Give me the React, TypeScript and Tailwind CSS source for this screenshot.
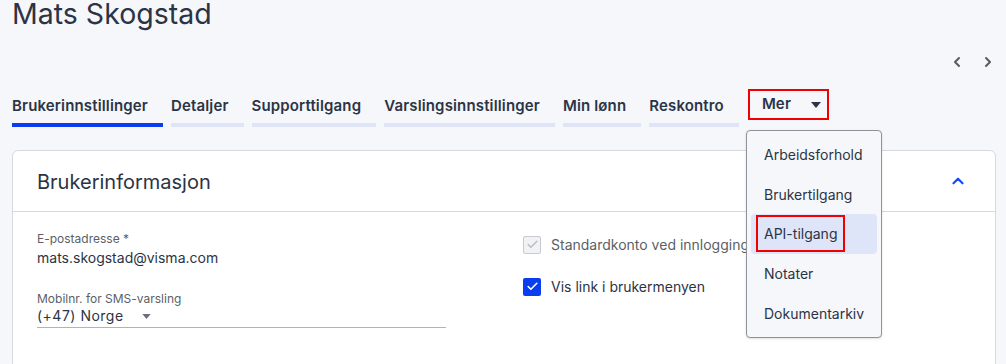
import React from "react";
import { ChevronLeft, ChevronRight, ChevronUp, Check } from "lucide-react";

const tabs = [
  { label: "Brukerinnstillinger", active: true },
  { label: "Detaljer" },
  { label: "Supporttilgang" },
  { label: "Varslingsinnstillinger" },
  { label: "Min lønn" },
  { label: "Reskontro" },
];

const menu = ["Arbeidsforhold", "Brukertilgang", "API-tilgang", "Notater", "Dokumentarkiv"];

function Caret({ className, w = 10, h = 6 }: { className?: string; w?: number; h?: number }) {
  return (
    <svg width={w} height={h} viewBox="0 0 10 6" className={className}>
      <path d="M0 0 L10 0 L5 6 Z" fill="currentColor" />
    </svg>
  );
}

export default function App() {
  return (
    <div
      className="relative h-[364px] w-full overflow-hidden bg-[#f6f7fb] text-[#2b3445]"
      style={{ fontFamily: "Inter, 'Open Sans', sans-serif" }}
    >
      <h1 className="pl-[12px] text-[28.5px] leading-[28px] font-normal text-[#2b3445]">
        Mats Skogstad
      </h1>
      <div className="mt-[26px] flex justify-end gap-[15px] pr-[10px] text-[#555b66]">
        <ChevronLeft size={16} strokeWidth={3} />
        <ChevronRight size={16} strokeWidth={3} />
      </div>
      <div className="mt-[19px] flex items-end gap-[8px] pl-[12px]">
        {tabs.map((t) => (
          <div
            key={t.label}
            className={`pr-[15px] pb-[7px] text-[15px] leading-[20px] font-semibold tracking-[0.15px] border-b-4 ${
              t.active ? "border-[#0a3cf0]" : "border-[#dfe4f6]"
            }`}
          >
            {t.label}
          </div>
        ))}
        <div className="ml-[1px] mb-[7px] flex h-[31px] w-[81px] items-center justify-between border-2 border-[#f00000] pl-[12px] pr-[6px] text-[15px] font-semibold tracking-[0.15px]">
          <span>Mer</span>
          <Caret className="text-[#2b3445]" />
        </div>
      </div>

      <div className="mx-[10px] ml-[12px] mt-[23px] rounded-[6px] border border-[#d6d8de] bg-white">
        <div className="flex h-[61px] items-center justify-between border-b border-[#d6d8de] pl-[24px] pr-[28px]">
          <span className="pt-[2px] text-[20px] font-normal text-[#2b3445]">Brukerinformasjon</span>
          <ChevronUp size={18} strokeWidth={3} className="text-[#1a4bf5]" />
        </div>
        <div className="grid grid-cols-[486px_1fr] pl-[24px] pt-[19px] pb-[40px]">
          <div className="flex flex-col">
            <span className="text-[12px] leading-[16px] text-[#5b5f66]">E-postadresse *</span>
            <span className="mt-[2px] text-[14px] leading-[18px] text-[#2b3445]">mats.skogstad@visma.com</span>
            <span className="mt-[24px] text-[12px] leading-[16px] text-[#5b5f66]">Mobilnr. for SMS-varsling</span>
            <div className="flex w-[409px] items-center border-b border-[#b0b3b8] pb-[2px] text-[14px] leading-[18px]">
              <span className="tracking-[0.5px]">(+47) Norge</span>
              <Caret w={9} h={5} className="ml-[18px] text-[#6b7078]" />
            </div>
          </div>
          <div className="flex flex-col gap-[21px] pt-[3px]">
            <div className="flex items-center gap-[10px]">
              <div className="flex h-[18px] w-[18px] items-center justify-center rounded-[2px] border border-[#c8cad0] bg-[#f1f2f4]">
                <Check size={13} strokeWidth={2.5} className="text-[#b8bbc1]" />
              </div>
              <span className="text-[14px] text-[#5b5f66]">Standardkonto ved innlogging</span>
            </div>
            <div className="flex items-center gap-[10px]">
              <div className="flex h-[18px] w-[18px] items-center justify-center rounded-[2px] bg-[#0a3cf0]">
                <Check size={13} strokeWidth={3} className="text-white" />
              </div>
              <span className="text-[14px] text-[#2b3445]">Vis link i brukermenyen</span>
            </div>
          </div>
        </div>
      </div>

      <div className="absolute left-[746px] top-[130px] w-[136px] rounded-[4px] border border-[#8e939b] bg-[#f6f7fb] px-[4px] py-[4px] shadow-sm">
        {menu.map((m) => (
          <div
            key={m}
            className={`flex h-[39.6px] items-center rounded-[4px] px-[13px] text-[14px] text-[#2b3445] ${
              m === "API-tilgang" ? "bg-[#dfe5f8]" : ""
            }`}
          >
            {m === "API-tilgang" ? (
              <span className="-ml-[8px] border-2 border-[#f00000] px-[6px] py-[6px]">{m}</span>
            ) : (
              m
            )}
          </div>
        ))}
      </div>
    </div>
  );
}
